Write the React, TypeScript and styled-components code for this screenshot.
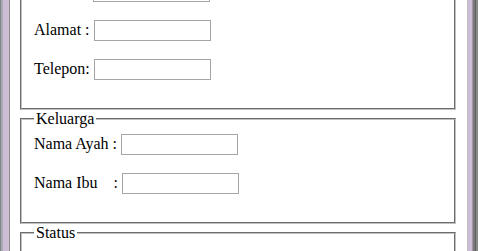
import React, { useLayoutEffect, useRef } from "react";
import styled, { createGlobalStyle } from "styled-components";

// how far the page is scrolled in the reference shot
const SCROLL_TOP = 51;

const GlobalStyle = createGlobalStyle`
  html, body {
    margin: 0;
    padding: 0;
    height: 100%;
    overflow: hidden;
  }
  body {
    font-family: "Liberation Serif", "Times New Roman", serif;
    font-size: 16px;
    color: #000;
    background: #fff;
  }
`;

const Window = styled.div`
  display: flex;
  height: 100vh;
  overflow: hidden;
`;

const LeftEdge = styled.div`
  flex: 0 0 10px;
  background: linear-gradient(
    to right,
    #858585 0px,
    #858585 1px,
    #a4abb2 1px,
    #a4abb2 3px,
    #cdbdd5 3px,
    #cdbdd5 9px,
    #8e8e8e 9px,
    #8e8e8e 10px
  );
`;

const RightEdge = styled.div`
  flex: 0 0 12px;
  background: linear-gradient(
    to right,
    #ffffff 0px,
    #ffffff 1px,
    #bdbdbd 1px,
    #bdbdbd 2px,
    #cdbdd5 2px,
    #cdbdd5 6px,
    #a595aa 6px,
    #a595aa 7px,
    #7a7a7a 7px,
    #7a7a7a 9px,
    #5e5e5e 9px,
    #5e5e5e 10px,
    #8a8a8a 10px,
    #8a8a8a 12px
  );
`;

const Page = styled.div`
  flex: 1;
  overflow: hidden;
  padding: 8px 8px 40px;
`;

const Group = styled.fieldset`
  margin: 0 2px;
  padding: 0.35em 12px 28.5px;
  border: 2px groove #c0c0c0;
  min-width: 0;
`;

const Caption = styled.legend`
  padding: 0 2px;
  font-size: 16px;
  line-height: normal;
`;

const Rows = styled.div`
  display: flex;
  flex-direction: column;
  gap: 18px;
`;

const Row = styled.div`
  display: flex;
  align-items: center;
  gap: 4px;
  height: 21px;
`;

const Label = styled.span`
  white-space: pre;
`;

const TextBox = styled.input`
  box-sizing: border-box;
  width: 117px;
  height: 21px;
  margin: 0;
  padding: 1px 2px;
  border: 1px solid #a5a5a5;
  font: 13px "Liberation Sans", Arial, sans-serif;
  background: #fff;
  outline: none;
`;

type Field = { label: string };

const sections: { title: string; fields: Field[] }[] = [
  {
    title: "Data Pribadi",
    fields: [{ label: "Nama   :" }, { label: "Alamat :" }, { label: "Telepon:" }],
  },
  {
    title: "Keluarga",
    fields: [{ label: "Nama Ayah :" }, { label: "Nama Ibu    :" }],
  },
  {
    title: "Status",
    fields: [],
  },
];

export default function App() {
  const pageRef = useRef<HTMLDivElement>(null);

  useLayoutEffect(() => {
    if (pageRef.current) pageRef.current.scrollTop = SCROLL_TOP;
  }, []);

  return (
    <>
      <GlobalStyle />
      <Window>
        <LeftEdge />
        <Page ref={pageRef}>
          {sections.map((s) => (
            <Group key={s.title}>
              <Caption>{s.title}</Caption>
              {s.fields.length > 0 && (
                <Rows>
                  {s.fields.map((f) => (
                    <Row key={f.label}>
                      <Label>{f.label}</Label>
                      <TextBox type="text" />
                    </Row>
                  ))}
                </Rows>
              )}
            </Group>
          ))}
        </Page>
        <RightEdge />
      </Window>
    </>
  );
}
